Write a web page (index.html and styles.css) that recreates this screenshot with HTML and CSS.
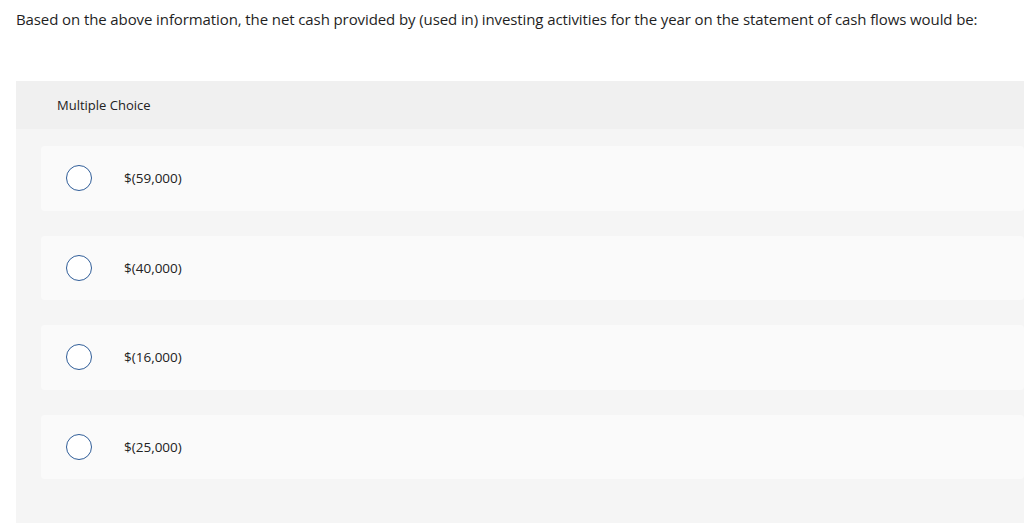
FILE: index.html
```html
<!DOCTYPE html>
<html>
<head>
<meta charset="utf-8">
<link rel="stylesheet" href="styles.css">
</head>
<body>
<p class="question">Based on the above information, the net cash provided by (used in) investing activities for the year on the statement of cash flows would be:</p>
<div class="panel">
  <div class="panel-head">Multiple Choice</div>
  <div class="options">
    <div class="option"><span class="radio"></span><span class="label">$(59,000)</span></div>
    <div class="option"><span class="radio"></span><span class="label">$(40,000)</span></div>
    <div class="option"><span class="radio"></span><span class="label">$(16,000)</span></div>
    <div class="option"><span class="radio"></span><span class="label">$(25,000)</span></div>
  </div>
</div>
</body>
</html>
```
FILE: styles.css
```css
html, body {
  margin: 0;
  padding: 0;
  background: #ffffff;
  font-family: "Open Sans", "Liberation Sans", sans-serif;
  color: #1f1f1f;
  overflow: hidden;
}
.question {
  margin: 0;
  padding: 9px 0 0 16px;
  font-size: 15px;
  letter-spacing: -0.1px;
  line-height: 20px;
  height: 72px;
  box-sizing: border-box;
}
.panel {
  margin-left: 16px;
  margin-top: 9px;
  background: #f5f5f5;
  height: 450px;
}
.panel-head {
  background: #f0f0f0;
  height: 48px;
  padding-left: 41px;
  display: flex;
  align-items: center;
  font-size: 13px;
  color: #222;
}
.options {
  padding: 17px 0 0 25px;
  display: flex;
  flex-direction: column;
  gap: 25px;
}
.option {
  background: #fafafa;
  border-radius: 4px;
  height: 64.5px;
  display: flex;
  align-items: center;
  padding-left: 25px;
}
.radio {
  width: 26px;
  height: 26px;
  border: 1px solid #2f5d98;
  border-radius: 50%;
  background: #fff;
  box-sizing: border-box;
  flex: none;
}
.label {
  margin-left: 32px;
  font-size: 13.5px;
  color: #222;
}
```
